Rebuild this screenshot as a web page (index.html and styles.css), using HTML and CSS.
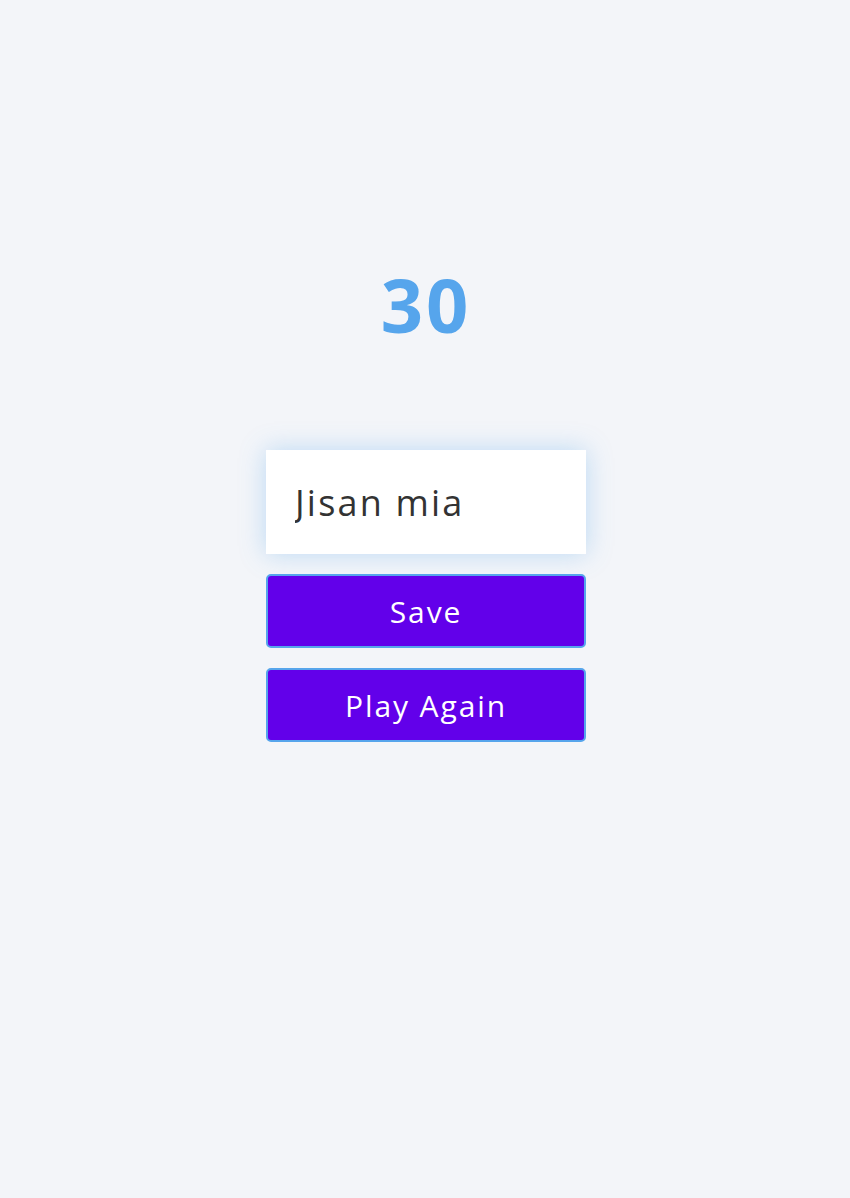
FILE: index.html
```html
<!DOCTYPE html>
<html>
<head>
<meta charset="utf-8">
<link rel="stylesheet" href="styles.css">
</head>
<body>
<main class="end">
  <h1 class="score">30</h1>
  <form class="form">
    <input class="name" type="text" value="Jisan mia">
    <button class="btn" type="button">Save</button>
    <button class="btn" type="button">Play Again</button>
  </form>
</main>
</body>
</html>
```

FILE: styles.css
```css
html, body {
  margin: 0;
  padding: 0;
  background: #f3f5f9;
  font-family: "Open Sans", "DejaVu Sans", sans-serif;
}
.end {
  display: flex;
  flex-direction: column;
  align-items: center;
  padding-top: 260px;
  padding-left: 2px;
}
.score {
  margin: 0;
  font-size: 74px;
  font-weight: 700;
  line-height: 90px;
  letter-spacing: 3px;
  color: #56a5ec;
}
.form {
  display: flex;
  flex-direction: column;
  gap: 20px;
  margin-top: 100px;
  width: 320px;
}
.name {
  box-sizing: border-box;
  width: 320px;
  height: 104px;
  border: none;
  outline: none;
  background: #fff;
  padding: 0 29px;
  font-family: inherit;
  font-size: 36px;
  letter-spacing: 2.2px;
  color: #333;
  box-shadow: 0 0 24px rgba(86, 165, 236, 0.35);
}
.btn {
  box-sizing: border-box;
  width: 320px;
  height: 74px;
  border: 2px solid #56a5ec;
  border-radius: 5px;
  background: #6200ea;
  color: #fff;
  font-family: inherit;
  font-size: 30px;
  font-weight: 500;
  letter-spacing: 1.9px;
  cursor: pointer;
}
```
